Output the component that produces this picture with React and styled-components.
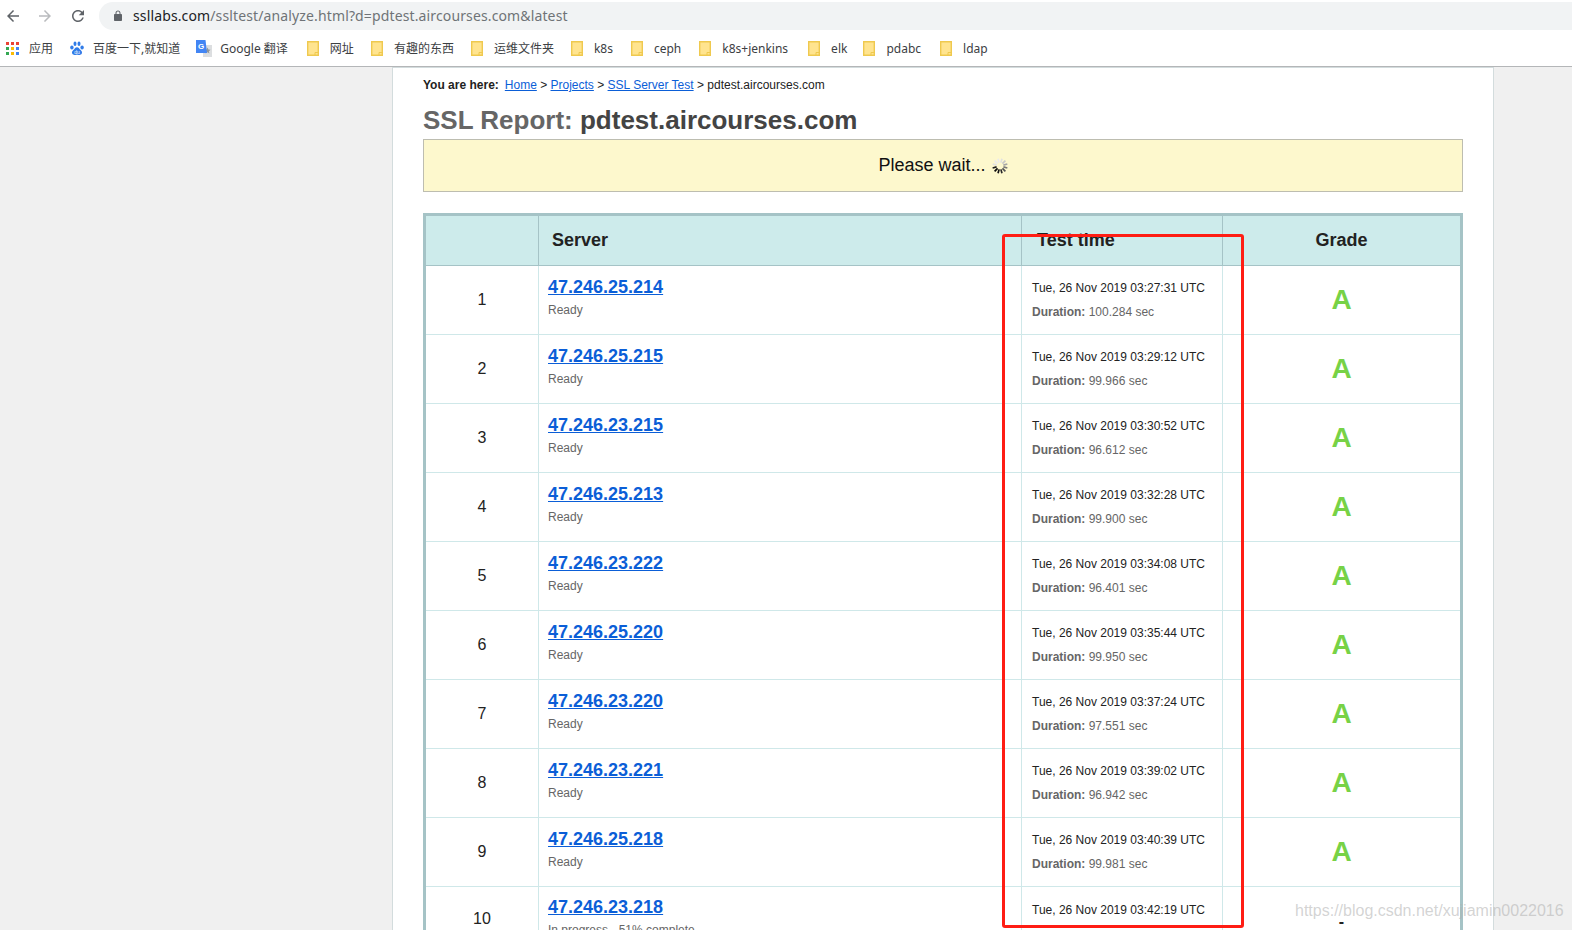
import styled, { createGlobalStyle } from "styled-components";

const GlobalStyle = createGlobalStyle`
  html, body {
    margin: 0;
    padding: 0;
    height: 930px;
    overflow: hidden;
    background: #f0f0f0;
    font-family: "Liberation Sans", Arial, sans-serif;
  }
`;

const Page = styled.div`
  position: relative;
  width: 1572px;
  height: 930px;
  overflow: hidden;
`;

const TopBar = styled.div`
  display: flex;
  align-items: center;
  height: 30px;
  padding-top: 2px;
  box-sizing: border-box;
  background: #fff;
`;

const NavButton = styled.div`
  display: flex;
  align-items: center;
  justify-content: center;
  width: 18px;
  height: 18px;
  margin-left: ${(p) => p.$left}px;
  color: ${(p) => (p.$off ? "#b9bbbe" : "#5f6368")};
`;

const Omnibox = styled.div`
  flex: 1;
  display: flex;
  align-items: center;
  height: 28px;
  margin-left: 12px;
  padding-left: 13px;
  padding-bottom: 1px;
  box-sizing: border-box;
  border-radius: 14px 0 0 14px;
  background: #f1f3f4;
  font-family: "Noto Sans", sans-serif;
  font-size: 14px;
  letter-spacing: 0.13px;
  color: #6f7377;
  white-space: pre;
`;

const Domain = styled.span`
  color: #202124;
`;

const LockIcon = styled.svg`
  width: 12px;
  height: 12px;
  margin-right: 9px;
  fill: #5f6368;
`;

const Bookmarks = styled.div`
  display: flex;
  align-items: center;
  height: 36px;
  padding-left: 6px;
  background: #fff;
  border-bottom: 1px solid #b4b6b8;
  box-sizing: content-box;
`;

const Bookmark = styled.div`
  display: flex;
  align-items: center;
  margin-right: ${(p) => p.$after}px;
  font-family: "Noto Sans", "Noto Sans CJK SC", sans-serif;
  font-size: 12px;
  color: #3c4043;
  white-space: nowrap;
`;

const BookmarkIcon = styled.svg`
  flex: none;
  width: ${(p) => p.$w || 12}px;
  height: ${(p) => p.$h || 15}px;
  margin-right: ${(p) => p.$gap || 11}px;
`;

const Sheet = styled.main`
  box-sizing: border-box;
  width: 1102px;
  height: 863px;
  margin-left: 392px;
  padding: 9px 30px 0 30px;
  background: #fff;
  border: 1px solid #d3dcdd;
  border-bottom: 0;
`;

const Crumbs = styled.div`
  height: 16px;
  font-size: 12px;
  line-height: 16px;
  color: #222;
  a {
    color: #0b5ed7;
    text-decoration: underline;
  }
  b {
    margin-right: 6px;
  }
`;

const Title = styled.h1`
  margin: 11px 0 0;
  height: 32px;
  font-size: 26px;
  line-height: 32px;
  font-weight: bold;
  color: #444;
  white-space: nowrap;
  span {
    color: #666;
  }
`;

const Notice = styled.div`
  display: flex;
  align-items: center;
  justify-content: center;
  gap: 6px;
  box-sizing: border-box;
  height: 53px;
  margin-top: 3px;
  background: #fdf8cd;
  border: 1px solid #bdbdb0;
  font-size: 18px;
  color: #111;
`;

const ReportTable = styled.table`
  width: 1040px;
  margin-top: 21px;
  border: 3px solid #a5c3c6;
  border-bottom: 0;
  border-collapse: separate;
  border-spacing: 0;
  table-layout: fixed;
`;

const HeadCell = styled.th`
  height: 50px;
  padding: 0 0 0 ${(p) => p.$pad || 0}px;
  background: #cdebeb;
  border-bottom: 1px solid #a5c3c6;
  border-right: ${(p) => (p.$last ? 0 : "1px solid #a5c3c6")};
  box-sizing: border-box;
  font-size: 18px;
  font-weight: bold;
  text-align: ${(p) => (p.$pad ? "left" : "center")};
  color: #222;
`;

const LastRow = styled.tr`
  td {
    height: 65px;
  }
`;

const Cell = styled.td`
  box-sizing: border-box;
  height: 69px;
  padding: 0;
  border-bottom: 1px solid #cfe8e9;
  border-right: ${(p) => (p.$last ? 0 : "1px solid #cfe8e9")};
`;

const NumberCell = styled(Cell)`
  font-size: 16px;
  text-align: center;
  vertical-align: middle;
  color: #222;
`;

const ServerCell = styled(Cell)`
  padding: ${(p) => (p.$early ? 8 : 9)}px 0 0 9px;
  vertical-align: top;
`;

const IpLink = styled.a`
  display: block;
  width: fit-content;
  font-size: 18px;
  line-height: 24px;
  font-weight: bold;
  color: #0b5ed7;
  text-decoration: underline;
`;

const Status = styled.div`
  margin-top: 3px;
  font-size: 12px;
  line-height: 16px;
  color: #666;
  white-space: nowrap;
`;

const TimeCell = styled(Cell)`
  padding: ${(p) => (p.$late ? 15 : 14)}px 0 0 10px;
  vertical-align: top;
  font-size: 12px;
  line-height: 16px;
  color: #222;
  white-space: nowrap;
`;

const Duration = styled.div`
  margin-top: 8px;
  color: #666;
`;

const GradeCell = styled(Cell)`
  padding-top: ${(p) => (p.$pending ? 5 : 0)}px;
  font-size: ${(p) => (p.$pending ? 16 : 28)}px;
  font-weight: bold;
  text-align: center;
  vertical-align: middle;
  color: ${(p) => (p.$pending ? "#222" : "#77d246")};
`;

const RedFrame = styled.div`
  position: absolute;
  left: 1002px;
  top: 234px;
  width: 242px;
  height: 694px;
  box-sizing: border-box;
  border: 3px solid #ff1d14;
  border-radius: 3px;
  pointer-events: none;
`;

const Watermark = styled.div`
  position: absolute;
  left: 1295px;
  top: 901px;
  font-size: 16px;
  line-height: 20px;
  color: rgba(175, 175, 175, 0.55);
  white-space: nowrap;
`;

const Folder = () => (
  <BookmarkIcon viewBox="0 0 12 15">
    <path d="M.7.7h10.6v13.600H.7z" fill="#ffe48f" stroke="#efc94f" strokeWidth="1.4" />
    <path d="M8 14.500V11.500h3.500" fill="none" stroke="#efc94f" strokeWidth="1" />
  </BookmarkIcon>
);

const AppsIcon = () => (
  <BookmarkIcon $w={13} $h={13} viewBox="0 0 13 13" $gap={10}>
    <rect x="0" y="0" width="3" height="3" fill="#ea4335" />
    <rect x="5" y="0" width="3" height="3" fill="#ea4335" />
    <rect x="10" y="0" width="3" height="3" fill="#ea4335" />
    <rect x="0" y="5" width="3" height="3" fill="#34a853" />
    <rect x="5" y="5" width="3" height="3" fill="#fbbc05" />
    <rect x="10" y="5" width="3" height="3" fill="#4285f4" />
    <rect x="0" y="10" width="3" height="3" fill="#34a853" />
    <rect x="5" y="10" width="3" height="3" fill="#fbbc05" />
    <rect x="10" y="10" width="3" height="3" fill="#4285f4" />
  </BookmarkIcon>
);

const BaiduIcon = () => (
  <BookmarkIcon $w={14} viewBox="0 0 14 15" $gap={9}>
    <g fill="#2f7be8">
      <ellipse cx="1.900" cy="6.500" rx="1.700" ry="2.100" />
      <ellipse cx="5" cy="2.800" rx="1.500" ry="2.300" />
      <ellipse cx="9" cy="2.800" rx="1.500" ry="2.300" />
      <ellipse cx="12.100" cy="6.500" rx="1.700" ry="2.100" />
      <path d="M7 6.200c-1.800 0-2.400 1.700-3.600 2.800C2 10.200 1.700 11.400 2.200 12.600c.6 1.300 2 1.600 3.200 1.300 1-.2 2.200-.2 3.200 0 1.200.3 2.600 0 3.200-1.300.5-1.200.2-2.400-1.200-3.600C9.400 7.900 8.800 6.200 7 6.200z" />
    </g>
    <text x="7" y="12.700" fontSize="5" textAnchor="middle" fill="#fff" fontFamily="Liberation Sans">du</text>
  </BookmarkIcon>
);

const TranslateIcon = () => (
  <BookmarkIcon $w={16} $h={17} viewBox="0 0 16 17" $gap={8}>
    <rect x="7" y="5" width="9" height="12" fill="#dcdee0" />
    <path d="M11.500 7.500l.9 2.100 2.200.2-1.700 1.400.5 2.200-1.900-1.200-1.900 1.200.5-2.200-1.700-1.400 2.200-.2z" fill="#8f959b" />
    <path d="M0 0h9.500L11 13H0z" fill="#4285f4" />
    <text x="5.200" y="9.300" fontSize="8" fontWeight="bold" textAnchor="middle" fill="#fff" fontFamily="Liberation Sans">G</text>
  </BookmarkIcon>
);

const spinnerShades = [235, 225, 200, 165, 120, 80, 40, 20, 10, 30, 225, 235];

const Spinner = () => (
  <svg width="16" height="16" viewBox="-8 -8 16 16">
    {spinnerShades.map((shade, i) => (
      <line
        key={i}
        x1="0"
        y1="-3.500"
        x2="0"
        y2="-7.600"
        stroke={`rgb(${shade},${shade},${shade})`}
        strokeWidth="1.700"
        transform={`rotate(${i * 30 - 15})`}
      />
    ))}
  </svg>
);

const bookmarks = [
  { icon: <AppsIcon />, label: "应用", after: 17 },
  { icon: <BaiduIcon />, label: "百度一下,就知道", after: 16 },
  { icon: <TranslateIcon />, label: "Google 翻译", after: 19 },
  { icon: <Folder />, label: "网址", after: 17 },
  { icon: <Folder />, label: "有趣的东西", after: 17 },
  { icon: <Folder />, label: "运维文件夹", after: 17 },
  { icon: <Folder />, label: "k8s", after: 18 },
  { icon: <Folder />, label: "ceph", after: 18 },
  { icon: <Folder />, label: "k8s+jenkins", after: 20 },
  { icon: <Folder />, label: "elk", after: 16 },
  { icon: <Folder />, label: "pdabc", after: 19 },
  { icon: <Folder />, label: "ldap", after: 0 },
];

const servers = [
  ["47.246.25.214", "03:27:31", "100.284"],
  ["47.246.25.215", "03:29:12", "99.966"],
  ["47.246.23.215", "03:30:52", "96.612"],
  ["47.246.25.213", "03:32:28", "99.900"],
  ["47.246.23.222", "03:34:08", "96.401"],
  ["47.246.25.220", "03:35:44", "99.950"],
  ["47.246.23.220", "03:37:24", "97.551"],
  ["47.246.23.221", "03:39:02", "96.942"],
  ["47.246.25.218", "03:40:39", "99.981"],
];

export default function App() {
  return (
    <Page>
      <GlobalStyle />
      <TopBar>
        <NavButton $left={4}>
          <svg width="18" height="18" viewBox="0 0 24 24" fill="currentColor">
            <path d="M20 11H7.830l5.590-5.590L12 4l-8 8 8 8 1.410-1.410L7.830 13H20v-2z" />
          </svg>
        </NavButton>
        <NavButton $left={14} $off>
          <svg width="18" height="18" viewBox="0 0 24 24" fill="currentColor">
            <path d="M12 4l-1.410 1.410L16.170 11H4v2h12.170l-5.580 5.590L12 20l8-8z" />
          </svg>
        </NavButton>
        <NavButton $left={15}>
          <svg width="20" height="20" viewBox="0 0 24 24" fill="currentColor">
            <path d="M17.650 6.350C16.200 4.900 14.210 4 12 4c-4.420 0-7.990 3.580-7.990 8s3.570 8 7.990 8c3.730 0 6.840-2.550 7.730-6h-2.080c-.82 2.330-3.040 4-5.650 4-3.310 0-6-2.690-6-6s2.690-6 6-6c1.660 0 3.140.69 4.220 1.780L13 11h7V4l-2.350 2.350z" />
          </svg>
        </NavButton>
        <Omnibox>
          <LockIcon viewBox="0 0 24 24">
            <path d="M18 8h-1V6c0-2.760-2.240-5-5-5S7 3.240 7 6v2H6c-1.100 0-2 .9-2 2v10c0 1.100.9 2 2 2h12c1.100 0 2-.9 2-2V10c0-1.100-.9-2-2-2zM9 6c0-1.660 1.340-3 3-3s3 1.340 3 3v2H9V6z" />
          </LockIcon>
          <Domain>ssllabs.com</Domain>/ssltest/analyze.html?d=pdtest.aircourses.com&amp;latest
        </Omnibox>
      </TopBar>
      <Bookmarks>
        {bookmarks.map((b) => (
          <Bookmark key={b.label} $after={b.after}>
            {b.icon}
            {b.label}
          </Bookmark>
        ))}
      </Bookmarks>
      <Sheet>
        <Crumbs>
          <b>You are here:</b>
          <a href="#home">Home</a> &gt; <a href="#projects">Projects</a> &gt;{" "}
          <a href="#ssl">SSL Server Test</a> &gt; pdtest.aircourses.com
        </Crumbs>
        <Title>
          <span>SSL Report:</span> pdtest.aircourses.com
        </Title>
        <Notice>
          Please wait... <Spinner />
        </Notice>
        <ReportTable>
          <colgroup>
            <col width="113" />
            <col width="483" />
            <col width="201" />
            <col width="237" />
          </colgroup>
          <thead>
            <tr>
              <HeadCell />
              <HeadCell $pad={13}>Server</HeadCell>
              <HeadCell $pad={15}>Test time</HeadCell>
              <HeadCell $last>Grade</HeadCell>
            </tr>
          </thead>
          <tbody>
            {servers.map((s, i) => (
              <tr key={s[0]}>
                <NumberCell>{i + 1}</NumberCell>
                <ServerCell>
                  <IpLink href="#ip">{s[0]}</IpLink>
                  <Status>Ready</Status>
                </ServerCell>
                <TimeCell>
                  Tue, 26 Nov 2019 {s[1]} UTC
                  <Duration>
                    <b>Duration:</b> {s[2]} sec
                  </Duration>
                </TimeCell>
                <GradeCell $last>A</GradeCell>
              </tr>
            ))}
            <LastRow>
              <NumberCell>10</NumberCell>
              <ServerCell $early>
                <IpLink href="#ip">47.246.23.218</IpLink>
                <Status>In progress - 51% complete</Status>
              </ServerCell>
              <TimeCell $late>Tue, 26 Nov 2019 03:42:19 UTC</TimeCell>
              <GradeCell $last $pending>-</GradeCell>
            </LastRow>
          </tbody>
        </ReportTable>
      </Sheet>
      <RedFrame />
      <Watermark>https://blog.csdn.net/xujiamin0022016</Watermark>
    </Page>
  );
}
